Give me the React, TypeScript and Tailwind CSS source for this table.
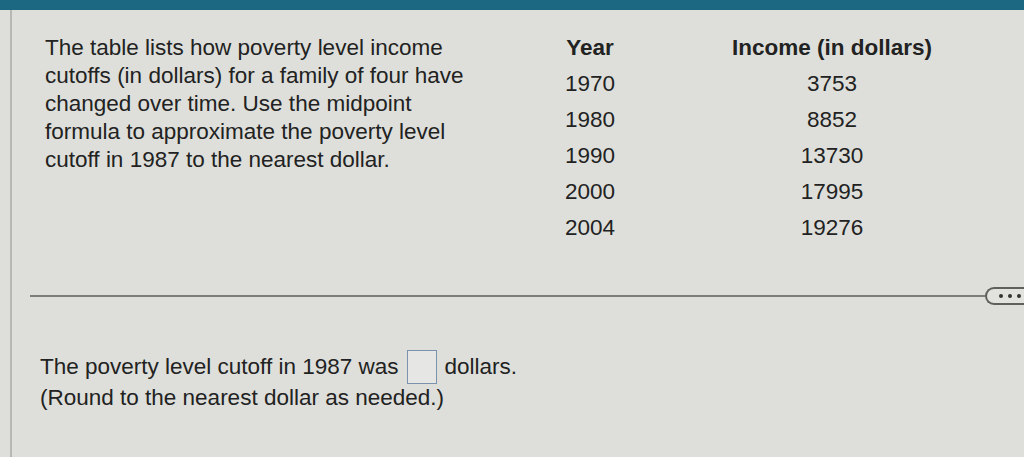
import React from 'react';

const rows = [
    { year: '1970', income: '3753' },
    { year: '1980', income: '8852' },
    { year: '1990', income: '13730' },
    { year: '2000', income: '17995' },
    { year: '2004', income: '19276' },
];

export default function App() {
    return (
        <div className="w-[1024px] h-[457px] overflow-hidden bg-[#dedfda] flex flex-col font-['Liberation_Sans',Arial,sans-serif] text-[#222222]">
            {/* --- TOP BAR --- */}
            <div className="h-[10px] shrink-0 bg-[#1c6882]" />

            <div className="flex flex-1">
                <div className="w-[10px] shrink-0" />
                <div className="w-[2px] shrink-0 bg-[#b7b8b3]" />

                <main className="flex-1 flex flex-col">
                    {/* --- QUESTION + TABLE --- */}
                    <section className="flex pt-[20px]">
                        <p className="w-[528px] shrink-0 pl-[33px] pt-[4px] text-[22.5px] leading-[28px] whitespace-nowrap">
                            The table lists how poverty level income<br />
                            cutoffs (in dollars) for a family of four have<br />
                            changed over time. Use the midpoint<br />
                            formula to approximate the poverty level<br />
                            cutoff in 1987 to the nearest dollar.
                        </p>

                        <div className="flex-1 flex flex-col text-[22.5px]">
                            <div className="flex h-[36px] items-center font-bold">
                                <div className="w-[100px] text-center">Year</div>
                                <div className="flex-1 text-center">Income (in dollars)</div>
                            </div>
                            {rows.map((r) => (
                                <div key={r.year} className="flex h-[36px] items-center">
                                    <div className="w-[100px] text-center">{r.year}</div>
                                    <div className="flex-1 text-center">{r.income}</div>
                                </div>
                            ))}
                        </div>
                    </section>

                    {/* --- DIVIDER --- */}
                    <div className="flex items-center h-[18px] mt-[41px] pl-[18px]">
                        <div className="flex-1 h-[2px] bg-[#7d7e7a]" />
                        <div className="w-[39px] h-[18px] border-2 border-r-0 border-[#5f605c] rounded-l-full flex items-center gap-[5px] pl-[12px] bg-[#e2e3df]">
                            <span className="w-[4px] h-[4px] rounded-full bg-[#333]" />
                            <span className="w-[4px] h-[4px] rounded-full bg-[#333]" />
                            <span className="w-[4px] h-[4px] rounded-full bg-[#333]" />
                        </div>
                    </div>

                    {/* --- ANSWER --- */}
                    <div className="mt-[45px] pl-[28px] text-[22.5px] leading-[28px]">
                        <div className="flex items-center h-[34px]">
                            <span>The poverty level cutoff in 1987 was</span>
                            <span className="ml-[8px] w-[30px] h-[34px] border border-[#7a92ae] bg-[#e6e7e4]" />
                            <span className="ml-[8px]">dollars.</span>
                        </div>
                        <p>(Round to the nearest dollar as needed.)</p>
                    </div>
                </main>
            </div>
        </div>
    );
}
